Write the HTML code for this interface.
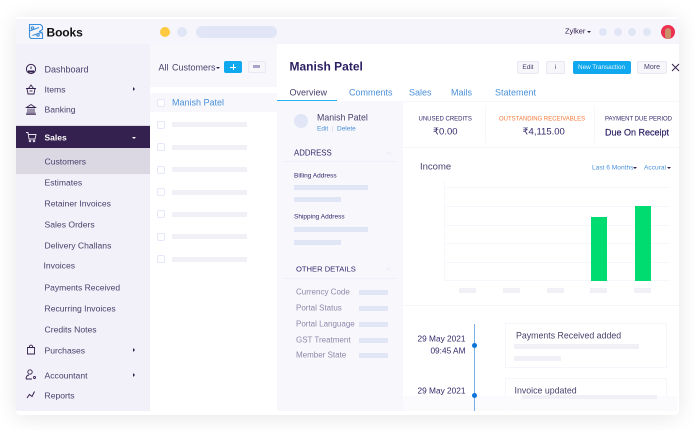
<!DOCTYPE html>
<html><head><meta charset="utf-8"><style>
html,body{margin:0;padding:0;background:#fff}
#p{position:relative;width:695px;height:430px;overflow:hidden;background:#fff;font-family:"Liberation Sans",sans-serif;filter:blur(.3px)}
#p div,#p span.t,#p svg{position:absolute}
.t{position:absolute;white-space:nowrap;line-height:12px;height:12px;margin-top:-6px;transform:translateY(.3px);font-size:8.6px;color:#4a3f6b}
.n{left:44.5px}
.b{background:#f0f0f6}
.a{background:#e1e6f7}
.cb{left:157px;width:6px;height:6px;border:1px solid #e4e8f8;border-radius:2px;background:#fff}
.l{left:172px;width:75px;height:5px;background:#f0f0f6}
.btn{top:60.5px;height:11px;background:#f6f6fb;border:1px solid #e8e8f2;border-radius:2px;text-align:center;font-size:6.5px;line-height:11px;color:#4a3f6b}
.g{left:444px;width:226px;height:1px;background:#f6f6fd}
.x{top:288px;height:5px;background:#f0f0f6;width:17px}
.lbl{left:296px;color:#8f88aa;font-size:8px}
.val{left:359px;width:29px;height:5px;background:#e1e6f7}
.car{width:0;height:0;border-left:2px solid transparent;border-right:2px solid transparent;border-top:2.5px solid #35214f}
.rt{width:0;height:0;border-top:2px solid transparent;border-bottom:2px solid transparent;border-left:2.5px solid #35214f;left:132.5px}
.tab{top:92px;font-size:9px;color:#4a90d9}
.d{left:415px;width:50.5px;text-align:right;font-size:8.3px;color:#35286b}
</style></head><body><div id="p">
<div style="left:16px;top:17px;width:663px;height:398px;background:#fff;border-radius:4px;box-shadow:0 2px 22px rgba(0,0,0,.1)"></div>
<div style="left:16px;top:19px;width:663px;height:25px;background:#f5f5fb"></div>
<div style="left:16px;top:44px;width:134px;height:367px;background:#f2f1f9"></div>
<div style="left:150px;top:44px;width:127px;height:43px;background:#f8f8fc"></div>
<div style="left:150px;top:93px;width:127px;height:19px;background:#f7f7fc"></div>
<div style="left:277px;top:101px;width:126px;height:310px;background:#f7f7fc"></div>

<svg style="left:28px;top:23px" width="16" height="17" viewBox="0 0 16 17" fill="none" stroke="#3d8fdc" stroke-width="1.1"><path d="M1.5 1.5H12.5L14.5 3.5V6.5L11.5 8.5L14.5 10.5V15.5H3L1.5 14Z"/><path d="M1.5 8L11 4.5M4.5 12.5L14.5 9"/><circle cx="4.5" cy="5" r="1.2"/><circle cx="10" cy="12" r="1.2"/></svg>
<span class="t" style="left:46.5px;top:31.5px;font-size:12px;font-weight:bold;color:#111;letter-spacing:-.1px">Books</span>
<div style="left:160px;top:26.5px;width:10px;height:10px;border-radius:50%;background:#fdc93f"></div>
<div class="a" style="left:177px;top:26.5px;width:10px;height:10px;border-radius:50%"></div>
<div class="a" style="left:196px;top:25.5px;width:81px;height:12px;border-radius:6px"></div>
<span class="t" style="left:565px;top:31px;font-size:7.5px;color:#35214f">Zylker</span>
<div class="car" style="left:587px;top:31px"></div>
<div class="a" style="left:599px;top:27.5px;width:8px;height:8px;border-radius:50%"></div>
<div class="a" style="left:614px;top:27.5px;width:8px;height:8px;border-radius:50%"></div>
<div class="a" style="left:628px;top:27.5px;width:8px;height:8px;border-radius:50%"></div>
<div class="a" style="left:643px;top:27.5px;width:8px;height:8px;border-radius:50%"></div>
<div style="left:661px;top:24.5px;width:14px;height:14px;border-radius:50%;background:#ee2f50;overflow:hidden"><div style="left:4px;top:3px;width:6px;height:11px;border-radius:3px;background:#c8916b"></div></div>

<svg style="left:25px;top:63px" width="12" height="12" viewBox="0 0 12 12" fill="none" stroke="#35214f"><circle cx="6" cy="6" r="4.6" stroke-width="1"/><path d="M3 8.5H9" stroke-width="2"/><path d="M6 6V3.5" stroke-width="1"/></svg>
<svg style="left:25px;top:84px" width="12" height="11" viewBox="0 0 12 11" fill="none" stroke="#35214f" stroke-width=".9"><path d="M1 4.5H11M2 4.5L3 10H9L10 4.5M3.5 4.5L6 1L8.5 4.5"/><path d="M4.5 7H7.5"/></svg>
<svg style="left:25px;top:103px" width="12" height="12" viewBox="0 0 12 12" fill="none" stroke="#35214f" stroke-width=".9"><path d="M1.5 4.5L6 1.5L10.5 4.5ZM3 5.5V9M5 5.5V9M7 5.5V9M9 5.5V9M1.5 10H10.5M1 11.3H11"/></svg>
<span class="t n" style="top:68.5px;font-size:9px">Dashboard</span>
<span class="t n" style="top:89px">Items</span><div class="rt" style="top:87px"></div>
<span class="t n" style="top:109px">Banking</span>
<div style="left:16px;top:125px;width:134px;height:1px;background:#dbd8e4"></div>
<div style="left:16px;top:126px;width:134px;height:22px;background:#35214f"></div>
<svg style="left:25px;top:131px" width="12" height="12" viewBox="0 0 12 12" fill="none" stroke="#e8e4f0" stroke-width=".9"><path d="M1 1.5H3L4 8H10L11 3.5H3.5"/><circle cx="5" cy="10" r=".8"/><circle cx="9" cy="10" r=".8"/></svg>
<span class="t n" style="top:136.5px;color:#fff;font-weight:bold;font-size:8.5px">Sales</span>
<div class="car" style="left:132px;top:137px;border-top-color:#fff"></div>
<div style="left:16px;top:148px;width:134px;height:26px;background:#dbd8e4"></div>
<span class="t n" style="top:160.5px">Customers</span>
<span class="t n" style="top:182px">Estimates</span>
<span class="t n" style="top:203px">Retainer Invoices</span>
<span class="t n" style="top:224px">Sales Orders</span>
<span class="t n" style="top:245px">Delivery Challans</span>
<span class="t" style="left:43.5px;top:264.5px">Invoices</span>
<span class="t n" style="top:287px;font-size:8.5px">Payments Received</span>
<span class="t n" style="top:308px">Recurring Invoices</span>
<span class="t n" style="top:329px">Credits Notes</span>
<svg style="left:26px;top:344px" width="10" height="11" viewBox="0 0 10 11" fill="none" stroke="#35214f" stroke-width=".9"><path d="M1.5 3.5H8.5V10H1.5ZM3.5 3.5V2Q5 .2 6.5 2V3.5"/></svg>
<span class="t n" style="top:349.5px">Purchases</span><div class="rt" style="top:347.5px"></div>
<svg style="left:25px;top:369px" width="12" height="11" viewBox="0 0 12 11" fill="none" stroke="#35214f" stroke-width=".9"><circle cx="5" cy="3" r="2.2"/><path d="M1 10Q1 6.5 4 6M1 10H7"/><circle cx="9.5" cy="8.5" r="1"/></svg>
<span class="t n" style="top:374.5px">Accountant</span><div class="rt" style="top:372.5px"></div>
<svg style="left:26px;top:390px" width="10" height="9" viewBox="0 0 10 9" fill="none" stroke="#35214f" stroke-width="1"><path d="M1 8L3.5 4.5L6 6.5L8.5 1.5"/></svg>
<span class="t n" style="top:394.5px">Reports</span>

<span class="t" style="left:158.5px;top:67px;font-size:9px;word-spacing:1px">All Customers</span>
<div class="car" style="left:215.5px;top:66.5px"></div>
<div style="left:224px;top:61px;width:18px;height:12px;background:#10a8ee;border-radius:2px"></div>
<div style="left:232.5px;top:64px;width:1px;height:6px;background:#fff"></div>
<div style="left:230px;top:66.5px;width:6px;height:1px;background:#fff"></div>
<div style="left:248px;top:61px;width:16px;height:10px;background:#f7f7fb;border:1px solid #e8e8f2;border-radius:2px"></div>
<div style="left:253px;top:65px;width:7px;height:3px;background:#a9a5c4"></div>
<div class="cb" style="top:98.5px"></div>
<span class="t" style="left:172px;top:102px;color:#4a90d9;font-size:9px">Manish Patel</span>
<div class="cb" style="top:120.5px"></div><div class="l" style="top:122px"></div>
<div class="cb" style="top:143px"></div><div class="l" style="top:144.5px"></div>
<div class="cb" style="top:165.5px"></div><div class="l" style="top:167px"></div>
<div class="cb" style="top:188px"></div><div class="l" style="top:189.5px"></div>
<div class="cb" style="top:210px"></div><div class="l" style="top:211.5px"></div>
<div class="cb" style="top:232.5px"></div><div class="l" style="top:234px"></div>
<div class="cb" style="top:255px"></div><div class="l" style="top:256.5px"></div>

<span class="t" style="left:289.5px;top:66px;font-size:12px;font-weight:bold;color:#2b1f63">Manish Patel</span>
<div class="btn" style="left:517px;width:20px">Edit</div>
<div class="btn" style="left:546px;width:17px">i</div>
<div class="btn" style="left:572.5px;width:58px;height:13px;background:#10a8ee;border:0;color:#e8f6ff;line-height:13px;font-size:6.3px">New Transaction</div>
<div class="btn" style="left:637px;width:28px;font-size:7px">More</div>
<svg style="left:671px;top:62.5px" width="9" height="9" viewBox="0 0 9 9" stroke="#35214f" stroke-width="1"><path d="M1 1L8 8M8 1L1 8"/></svg>
<span class="t" style="left:289.5px;top:92px;font-size:9px;color:#4a3f6b">Overview</span>
<div style="left:277px;top:99.5px;width:60px;height:1px;background:#22b5f5"></div>
<span class="t tab" style="left:349px">Comments</span>
<span class="t tab" style="left:409px">Sales</span>
<span class="t tab" style="left:451px">Mails</span>
<span class="t tab" style="left:495px">Statement</span>

<div class="a" style="left:294px;top:114px;width:14px;height:14px;border-radius:50%"></div>
<span class="t" style="left:317px;top:117px;font-size:8.8px">Manish Patel</span>
<span class="t" style="left:317px;top:129px;font-size:6.5px;color:#4a90d9">Edit</span>
<div style="left:332px;top:126px;width:1px;height:6px;background:#e4e4ee"></div>
<span class="t" style="left:337px;top:129px;font-size:6.5px;color:#4a90d9">Delete</span>
<span class="t" style="left:294px;top:153px;font-size:7.8px;color:#35286b">ADDRESS</span>
<div style="left:283px;top:161px;width:115px;height:1px;background:#eff0fa"></div>
<span class="t" style="left:294px;top:176px;font-size:6.5px;color:#35286b">Billing Address</span>
<div class="a" style="left:294px;top:185px;width:74px;height:5px"></div>
<div class="a" style="left:294px;top:197px;width:47px;height:5px"></div>
<span class="t" style="left:294px;top:217px;font-size:6.5px;color:#35286b">Shipping Address</span>
<div class="a" style="left:294px;top:227px;width:74px;height:5px"></div>
<div class="a" style="left:294px;top:240px;width:47px;height:5px"></div>
<span class="t" style="left:296px;top:269px;font-size:7.6px;color:#35286b">OTHER DETAILS</span>
<div style="left:283px;top:278px;width:115px;height:1px;background:#eff0fa"></div>
<svg style="left:385px;top:151px" width="7" height="4" viewBox="0 0 7 4" fill="none" stroke="#e8e8f4" stroke-width=".8"><path d="M1 3.5L3.5 1L6 3.5"/></svg>
<svg style="left:385px;top:267px" width="7" height="4" viewBox="0 0 7 4" fill="none" stroke="#e8e8f4" stroke-width=".8"><path d="M1 3.5L3.5 1L6 3.5"/></svg>
<span class="t lbl" style="top:292px">Currency Code</span><div class="val" style="top:290px"></div>
<span class="t lbl" style="top:308px">Portal Status</span><div class="val" style="top:306px"></div>
<span class="t lbl" style="top:324px">Portal Language</span><div class="val" style="top:322px"></div>
<span class="t lbl" style="top:339.5px">GST Treatment</span><div class="val" style="top:337.5px"></div>
<span class="t lbl" style="top:355px">Member State</span><div class="val" style="top:353px"></div>

<div style="left:403px;top:101px;width:276px;height:1px;background:#f6f6fb"></div>
<div style="left:403px;top:147px;width:276px;height:1px;background:#f4f4f9"></div>
<div style="left:594px;top:106px;width:1px;height:37px;background:#f6f6fb"></div>
<div style="left:485px;top:106px;width:1px;height:37px;background:#f6f6fb"></div>
<span class="t" style="left:418.5px;top:119px;font-size:6px;color:#35286b">UNUSED CREDITS</span>
<span class="t" style="left:433px;top:132px;font-size:9.5px;color:#35286b;font-family:'Liberation Sans','DejaVu Sans',sans-serif">₹0.00</span>
<span class="t" style="left:499px;top:119px;font-size:6px;color:#f47a3a">OUTSTANDING RECEIVABLES</span>
<span class="t" style="left:522.5px;top:132px;font-size:9.5px;color:#35286b;font-family:'Liberation Sans','DejaVu Sans',sans-serif">₹4,115.00</span>
<span class="t" style="left:605px;top:119px;font-size:6px;color:#35286b">PAYMENT DUE PERIOD</span>
<span class="t" style="left:605px;top:132px;font-size:9px;color:#2b1f63;-webkit-text-stroke:.2px #2b1f63">Due On Receipt</span>

<span class="t" style="left:420px;top:167px;font-size:9.5px">Income</span>
<span class="t" style="left:592px;top:167.5px;font-size:6.6px;color:#4a90d9">Last 6 Months</span>
<div class="car" style="left:632.5px;top:167px"></div>
<span class="t" style="left:644px;top:167.5px;font-size:6.6px;color:#4a90d9">Accural</span>
<div class="car" style="left:666.5px;top:167px"></div>
<div style="left:444px;top:181px;width:1px;height:100px;background:#f6f6fd"></div>
<div class="g" style="top:187px"></div><div class="g" style="top:206px"></div><div class="g" style="top:225px"></div><div class="g" style="top:243px"></div><div class="g" style="top:262px"></div><div class="g" style="top:280px"></div>
<div style="left:590.5px;top:217px;width:16px;height:64px;background:#00dc6f"></div>
<div style="left:634.5px;top:206px;width:16px;height:75px;background:#00dc6f"></div>
<div class="x" style="left:459px"></div><div class="x" style="left:503px"></div><div class="x" style="left:546.5px"></div><div class="x" style="left:590px"></div><div class="x" style="left:634px"></div>
<div style="left:403px;top:305px;width:276px;height:1px;background:#f5f5fa"></div>

<div style="left:505px;top:323px;width:160px;height:43px;border:1px solid #f5f5fc"></div>
<span class="t" style="left:516px;top:334.5px;font-size:8.8px">Payments Received added</span>
<div class="b" style="left:514px;top:344px;width:125px;height:5px"></div>
<div class="b" style="left:514px;top:356px;width:47px;height:5px"></div>
<div style="left:505px;top:378px;width:160px;height:33px;border:1px solid #f5f5fc;border-bottom:0"></div>
<span class="t" style="left:514.5px;top:390px;font-size:8.8px">Invoice updated</span>
<div style="left:403px;top:396px;width:274px;height:15px;background:#fbfbfd"></div>
<div class="b" style="left:522px;top:395px;width:135px;height:4px"></div>
<div style="left:474px;top:324px;width:1px;height:87px;background:#7ab0ea"></div>
<div style="left:472px;top:342.5px;width:5px;height:5px;border-radius:50%;background:#0a74dd"></div>
<div style="left:472px;top:393px;width:5px;height:5px;border-radius:50%;background:#0a74dd"></div>
<span class="t d" style="top:337.5px">29 May 2021</span>
<span class="t d" style="top:350px">09:45 AM</span>
<span class="t d" style="top:390px">29 May 2021</span>
</div></body></html>
